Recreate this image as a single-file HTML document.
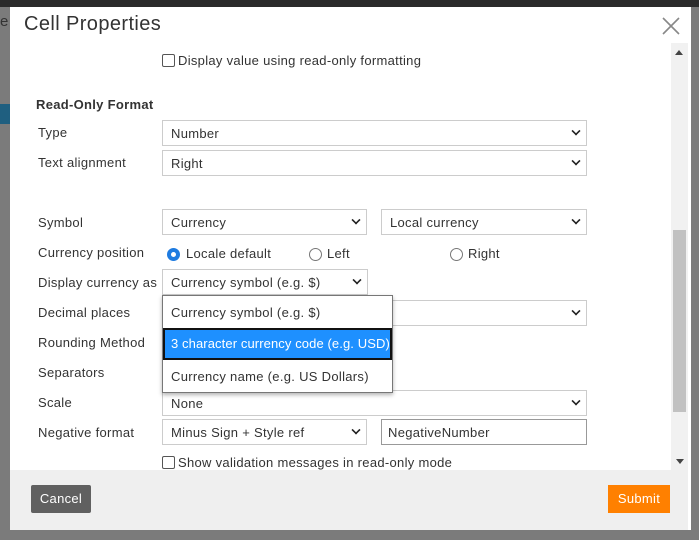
<!DOCTYPE html>
<html><head><style>
*{box-sizing:border-box;margin:0;padding:0}
body{width:699px;height:540px;background:#7b7b7b;font-family:"Liberation Sans",sans-serif;font-size:13px;color:#333;position:relative;overflow:hidden;letter-spacing:.3px}
.a{position:absolute}
.dlg{left:10px;top:7px;width:681px;height:523px;background:#fff}
.sel{position:absolute;height:26px;border:1px solid #ccc;background:#fff;padding:5px 8px;white-space:nowrap}
.sel .c{position:absolute;right:6px;top:6px;width:8px;height:8px;border-right:2px solid #222;border-bottom:2px solid #222;transform:rotate(45deg) scale(.8)}
.lbl{position:absolute;left:38px}
.rad{position:absolute;width:13px;height:13px;border:1px solid #777;border-radius:50%;background:#fff}
.cb{position:absolute;width:13px;height:13px;border:1px solid #555;border-radius:2px;background:#fff}
</style></head><body>
<div class="a" style="left:0;top:0;width:699px;height:7px;background:#2a2a2a"></div>
<div class="a" style="left:0;top:13px;color:#333;font-size:15px">e</div>
<div class="a" style="left:0;top:104px;width:10px;height:20px;background:#1f5f80"></div>
<div class="a dlg"></div>
<div class="a" style="left:24px;top:13px;font-size:20px;color:#333;letter-spacing:.4px">Cell Properties</div>
<svg class="a" style="left:662px;top:17px" width="18" height="18"><path d="M1 1L17 17M17 1L1 17" stroke="#888" stroke-width="1.6"/></svg>
<div class="a" style="left:671px;top:43px;width:17px;height:427px;background:#f1f1f1"></div>
<div class="a" style="left:675px;top:50px;border:4px solid transparent;border-bottom:5px solid #444;border-top:0"></div>
<div class="a" style="left:673px;top:230px;width:13px;height:182px;background:#c1c1c1"></div>
<div class="a" style="left:676px;top:459px;border:4px solid transparent;border-top:5px solid #444;border-bottom:0"></div>

<div class="cb" style="left:162px;top:54px"></div>
<div class="a" style="left:178px;top:53px">Display value using read-only formatting</div>
<div class="a" style="left:36px;top:97px;font-weight:bold">Read-Only Format</div>

<div class="lbl" style="top:125px">Type</div>
<div class="sel" style="left:162px;top:120px;width:425px">Number<i class="c"></i></div>
<div class="lbl" style="top:155px">Text alignment</div>
<div class="sel" style="left:162px;top:150px;width:425px">Right<i class="c"></i></div>

<div class="lbl" style="top:215px">Symbol</div>
<div class="sel" style="left:162px;top:209px;width:205px">Currency<i class="c"></i></div>
<div class="sel" style="left:381px;top:209px;width:206px">Local currency<i class="c"></i></div>

<div class="lbl" style="top:245px">Currency position</div>
<div class="rad" style="left:167px;top:248px;border:4px solid #1e7be0"></div>
<div class="a" style="left:186px;top:246px">Locale default</div>
<div class="rad" style="left:309px;top:248px"></div>
<div class="a" style="left:327px;top:246px">Left</div>
<div class="rad" style="left:450px;top:248px"></div>
<div class="a" style="left:468px;top:246px">Right</div>

<div class="lbl" style="top:275px">Display currency as</div>
<div class="sel" style="left:162px;top:269px;width:206px">Currency symbol (e.g. $)<i class="c"></i></div>

<div class="lbl" style="top:305px">Decimal places</div>
<div class="sel" style="left:162px;top:300px;width:425px"><i class="c"></i></div>
<div class="lbl" style="top:335px">Rounding Method</div>
<div class="lbl" style="top:365px">Separators</div>
<div class="lbl" style="top:395px">Scale</div>
<div class="sel" style="left:162px;top:390px;width:425px">None<i class="c"></i></div>

<div class="lbl" style="top:425px">Negative format</div>
<div class="sel" style="left:162px;top:419px;width:205px">Minus Sign + Style ref<i class="c"></i></div>
<div class="sel" style="left:381px;top:419px;width:206px;border-color:#999;padding-left:6px">NegativeNumber</div>

<div class="cb" style="left:162px;top:456px"></div>
<div class="a" style="left:178px;top:455px">Show validation messages in read-only mode</div>

<div class="a" style="left:162px;top:295px;width:231px;height:98px;background:#fff;border:1px solid #777;box-shadow:0 2px 4px rgba(0,0,0,.3)"></div>
<div class="a" style="left:171px;top:305px">Currency symbol (e.g. $)</div>
<div class="a" style="left:163px;top:328px;width:229px;height:32px;background:#1e90ff;border:2px solid #111;color:#fff;padding:6px 0 0 6px;letter-spacing:.1px;white-space:nowrap">3 character currency code (e.g. USD)</div>
<div class="a" style="left:171px;top:369px">Currency name (e.g. US Dollars)</div>

<div class="a" style="left:10px;top:470px;width:678px;height:60px;background:#efefef"></div>
<div class="a" style="left:31px;top:485px;width:60px;height:28px;background:#606060;color:#fff;text-align:center;line-height:28px;border-radius:2px">Cancel</div>
<div class="a" style="left:608px;top:485px;width:62px;height:28px;background:#ff8000;color:#fff;text-align:center;line-height:28px">Submit</div>
</body></html>
